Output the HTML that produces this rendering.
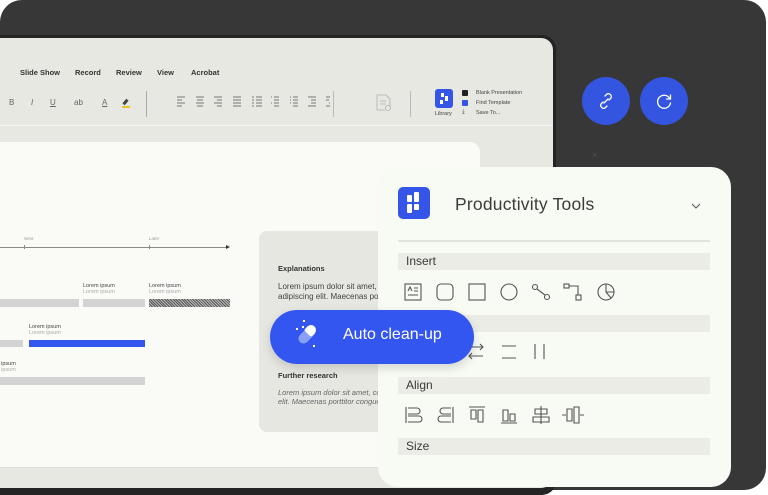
<!DOCTYPE html>
<html><head><meta charset="utf-8"><style>
*{margin:0;padding:0;box-sizing:border-box}
body{width:768px;height:470px;overflow:hidden;background:#fff;font-family:"Liberation Sans",sans-serif;position:relative}
.a{position:absolute}
.t{position:absolute;white-space:nowrap}
</style></head><body>
<div class="a" style="left:0;top:0;width:766px;height:490px;background:#373737;border-radius:22px"></div>
<!-- window -->
<div class="a" style="left:-20px;top:35px;width:576px;height:460px;background:#242424;border-radius:14px"></div>
<div class="a" style="left:-20px;top:38px;width:573px;height:450px;background:#e7e8e1;border-radius:12px;overflow:hidden">
</div>
<div class="a" style="left:0;top:125px;width:553px;height:1px;background:#f4f5f0"></div>
<div class="t" style="left:-4px;top:68px;font-size:7.5px;color:#333;font-weight:bold;word-spacing:1px">s</div>
<div class="t" style="left:20px;top:68px;font-size:7.5px;color:#333;font-weight:bold">Slide Show</div>
<div class="t" style="left:75px;top:68px;font-size:7.5px;color:#333;font-weight:bold">Record</div>
<div class="t" style="left:116px;top:68px;font-size:7.5px;color:#333;font-weight:bold">Review</div>
<div class="t" style="left:157px;top:68px;font-size:7.5px;color:#333;font-weight:bold">View</div>
<div class="t" style="left:191px;top:68px;font-size:7.5px;color:#333;font-weight:bold">Acrobat</div>
<div class="t" style="left:9px;top:98px;font-size:8px;color:#666">B</div>
<div class="t" style="left:31px;top:98px;font-size:8px;color:#666;font-style:italic">I</div>
<div class="t" style="left:50px;top:98px;font-size:8px;color:#666;text-decoration:underline">U</div>
<div class="t" style="left:74px;top:98px;font-size:8px;color:#666">ab</div>
<div class="t" style="left:102px;top:98px;font-size:8px;color:#666;text-decoration:underline">A</div>
<div class="a" style="left:122px;top:106px;width:8px;height:2px;background:#e6c62a"></div>
<div class="a" style="left:124px;top:99px;width:3px;height:6px;background:#444;transform:rotate(40deg)"></div>
<div class="a" style="left:146px;top:91px;width:1px;height:26px;background:#aaa"></div>
<div class="a" style="left:333px;top:91px;width:1px;height:26px;background:#bbb"></div>
<div class="a" style="left:410px;top:91px;width:1px;height:26px;background:#bbb"></div>
<svg class="a" style="left:170px;top:96px" width="160" height="12" stroke="#777" stroke-width="1">
<g><path d="M7 1h8M7 4h5M7 7h8M7 10h5"/><path d="M26 1h8M27 4h6M26 7h8M27 10h6"/><path d="M44 1h8M47 4h5M44 7h8M47 10h5"/><path d="M63 1h8M63 4h8M63 7h8M63 10h8"/><path d="M82 1h2M86 1h6M82 4h2M86 4h6M82 7h2M86 7h6M82 10h2M86 10h6"/><path d="M101 1h1M104 1h5M104 4h5M101 7h1M104 7h5M104 10h5"/><path d="M120 1h1M123 1h5M120 4h1M123 4h5M120 7h1M123 7h5M123 10h5"/><path d="M138 1h8M141 4h5M141 7h5M138 10h8"/><path d="M156 1h8M156 4h3M159 7h5M156 10h8" /></g></svg>
<svg class="a" style="left:376px;top:94px" width="16" height="18" fill="none" stroke="#bbb"><path d="M1 1h9l4 4v8M1 1v15h8"/><path d="M4 7h6M4 10h6"/><circle cx="12" cy="14" r="2.5"/></svg>
<div class="a" style="left:435px;top:89px;width:18px;height:19px;background:#3455e8;border-radius:3px"></div>
<div class="a" style="left:441px;top:93px;width:3px;height:4px;background:#fff"></div><div class="a" style="left:445px;top:96px;width:3px;height:5px;background:#fff"></div><div class="a" style="left:440px;top:100px;width:3px;height:4px;background:#fff"></div>
<div class="t" style="left:435px;top:111px;font-size:5.5px;color:#444">Library</div>
<div class="a" style="left:462px;top:90px;width:6px;height:6px;background:#222;border-radius:1px"></div>
<div class="a" style="left:462px;top:100px;width:6px;height:6px;background:#3455e8;border-radius:1px"></div>
<div class="t" style="left:462px;top:109px;font-size:6px;color:#444">⤓</div>
<div class="t" style="left:476px;top:90px;font-size:5.5px;color:#444">Blank Presentation</div>
<div class="t" style="left:476px;top:100px;font-size:5.5px;color:#444">Find Template</div>
<div class="t" style="left:476px;top:110px;font-size:5.5px;color:#444">Save To...</div>
<!-- slide -->
<div class="a" style="left:-10px;top:142px;width:490px;height:326px;background:#fafbf7;border-radius:10px;border-bottom:1px solid #ddd"></div>
<div class="a" style="left:0;top:247px;width:226px;height:1px;background:#888"></div>
<div class="a" style="left:226px;top:245px;width:0;height:0;border-left:4px solid #333;border-top:2.5px solid transparent;border-bottom:2.5px solid transparent"></div>
<div class="a" style="left:24px;top:245px;width:1px;height:4px;background:#888"></div>
<div class="a" style="left:149px;top:245px;width:1px;height:4px;background:#888"></div>
<div class="t" style="left:24px;top:236px;font-size:4.5px;color:#999;font-style:italic">Next</div>
<div class="t" style="left:149px;top:236px;font-size:4.5px;color:#999;font-style:italic">Later</div>
<div class="t" style="left:83px;top:283px;font-size:5.5px;color:#444;line-height:6px">Lorem ipsum<br><span style="color:#aaa">Lorem ipsum</span></div>
<div class="t" style="left:149px;top:283px;font-size:5.5px;color:#444;line-height:6px">Lorem ipsum<br><span style="color:#aaa">Lorem ipsum</span></div>
<div class="a" style="left:0;top:299px;width:79px;height:8px;background:#d3d3d3"></div>
<div class="a" style="left:83px;top:299px;width:62px;height:8px;background:#d3d3d3"></div>
<div class="a" style="left:149px;top:299px;width:81px;height:8px;background:repeating-linear-gradient(45deg,#555 0 1px,#bbb 1px 2px)"></div>
<div class="t" style="left:29px;top:324px;font-size:5.5px;color:#444;line-height:6px">Lorem ipsum<br><span style="color:#aaa">Lorem ipsum</span></div>
<div class="a" style="left:0;top:340px;width:23px;height:7px;background:#d3d3d3"></div>
<div class="a" style="left:29px;top:340px;width:116px;height:7px;background:#3455ee"></div>
<div class="t" style="left:-16px;top:361px;font-size:5.5px;color:#444;line-height:6px">Lorem ipsum<br><span style="color:#aaa">Lorem ipsum</span></div>
<div class="a" style="left:0;top:377px;width:145px;height:8px;background:#d3d3d3"></div>
<div class="a" style="left:259px;top:231px;width:140px;height:201px;background:#e6e7e1;border-radius:8px"></div>
<div class="t" style="left:278px;top:264px;font-size:7.5px;color:#333;font-weight:bold">Explanations</div>
<div class="t" style="left:278px;top:282px;font-size:8px;color:#444;line-height:9.5px">Lorem ipsum dolor sit amet,<br>adipiscing elit. Maecenas por</div>
<div class="t" style="left:278px;top:371px;font-size:7.5px;color:#333;font-weight:bold">Further research</div>
<div class="t" style="left:278px;top:388px;font-size:7.5px;color:#666;font-style:italic;line-height:9px">Lorem ipsum dolor sit amet, cc<br>elit. Maecenas porttitor congue</div>
<!-- circles -->
<div class="a" style="left:582px;top:77px;width:48px;height:48px;border-radius:50%;background:#3455e0"></div>
<svg class="a" style="left:594px;top:89px" width="24" height="24" fill="none" stroke="#fff" stroke-width="1.3" stroke-linecap="round"><path d="M11 7l2-2a3 3 0 014 4l-2 2M13 17l-2 2a3 3 0 01-4-4l2-2M10 14l4-4"/></svg>
<div class="a" style="left:640px;top:77px;width:48px;height:48px;border-radius:50%;background:#3455e0"></div>
<svg class="a" style="left:652px;top:89px" width="24" height="24" fill="none" stroke="#fff" stroke-width="1.3" stroke-linecap="round"><path d="M18 10a6.5 6.5 0 10.5 4"/><path d="M18.5 6v4h-4"/></svg>
<div class="t" style="left:592px;top:150px;font-size:9px;color:#555">×</div>
<!-- panel -->
<div class="a" style="left:378px;top:167px;width:353px;height:320px;background:#f8faf4;border-radius:20px"></div>
<div class="a" style="left:398px;top:187px;width:32px;height:32px;background:#3455e8;border-radius:5px"></div>
<div class="a" style="left:407px;top:195px;width:5px;height:7px;background:#fff;border-radius:1px"></div>
<div class="a" style="left:414px;top:192px;width:5px;height:10px;background:#fff;border-radius:1px"></div>
<div class="a" style="left:407px;top:204px;width:5px;height:9px;background:#fff;border-radius:1px"></div>
<div class="a" style="left:414px;top:204px;width:5px;height:6px;background:#fff;border-radius:1px"></div>
<div class="t" style="left:455px;top:194px;font-size:17.5px;color:#3c3c3c;letter-spacing:0.2px">Productivity Tools</div>
<svg class="a" style="left:691px;top:202px" width="10" height="8" fill="none" stroke="#555"><path d="M1 2l4 4 4-4"/></svg>
<div class="a" style="left:398px;top:240px;width:312px;height:1.5px;background:#e2e3dd"></div>
<div class="a" style="left:398px;top:253px;width:312px;height:17px;background:#ebece6"></div>
<div class="t" style="left:406px;top:254px;font-size:12px;color:#3a3a3a">Insert</div>
<div class="a" style="left:398px;top:315px;width:312px;height:17px;background:#ebece6"></div>
<div class="a" style="left:398px;top:377px;width:312px;height:17px;background:#ebece6"></div>
<div class="t" style="left:406px;top:378px;font-size:12px;color:#3a3a3a">Align</div>
<div class="a" style="left:398px;top:438px;width:312px;height:17px;background:#ebece6"></div>
<div class="t" style="left:406px;top:439px;font-size:12px;color:#3a3a3a">Size</div>
<svg class="a" style="left:398px;top:280px" width="320" height="150" fill="none" stroke="#555" stroke-width="1.1">
<rect x="7" y="4" width="16" height="16"/><path d="M10 11l2-4 2 4M16 8h4M16 11h4M10 15h10"/>
<rect x="39" y="4" width="16" height="16" rx="4"/>
<rect x="71" y="4" width="16" height="16"/>
<circle cx="111" cy="12" r="8"/>
<circle cx="137" cy="7" r="2.5"/><circle cx="149" cy="17" r="2.5"/><path d="M139 9l8 6"/>
<rect x="166" y="4" width="5" height="4"/><rect x="178" y="15" width="5" height="5"/><path d="M171 6h9v9"/>
<circle cx="208" cy="12" r="8"/><path d="M208 4v8h8M208 12l5 6"/>
<path d="M71 67h14M71 76h14M82 64l3 3-3 3M74 73l-3 3 3 3"/>
<path d="M104 66h14M104 78h14"/>
<path d="M137 64v15M146 64v15"/>
<path d="M8 127v16M10 128h9a3 3 0 010 6h-9M10 136h11a3 3 0 010 6h-11"/>
<path d="M55 127v16M53 128h-8a3 3 0 000 6h8M53 136h-10a3 3 0 000 6h10"/>
<path d="M71 127h16M73 130h5v9h-5zM80 130h5v12h-5z"/>
<path d="M103 143h16M105 130h5v11h-5zM112 134h5v7h-5z"/>
<path d="M143 126v18M137 129h12v5h-12zM135 137h16v5h-16z"/>
<path d="M164 135h4M182 135h4M169 129h5v12h-5zM176 127h5v16h-5z"/>
</svg>
<!-- pill -->
<div class="a" style="left:270px;top:310px;width:204px;height:54px;background:#3456f0;border-radius:27px;box-shadow:0 4px 10px rgba(0,0,0,.15)"></div>
<div class="a" style="left:297px;top:330px;width:20px;height:10px;border-radius:5px;background:#8aa0f5;transform:rotate(-45deg)"></div>
<div class="a" style="left:306px;top:325px;width:10px;height:10px;border-radius:5px 5px 2px 2px;background:#fff;transform:rotate(45deg)"></div>
<div class="a" style="left:296px;top:328px;width:2px;height:2px;background:#fff"></div>
<div class="a" style="left:302px;top:326px;width:2px;height:2px;background:#fff"></div>
<div class="a" style="left:303px;top:320px;width:2px;height:2px;background:#fff"></div>
<div class="a" style="left:313px;top:345px;width:2px;height:2px;background:#fff"></div>
<div class="t" style="left:343px;top:326px;font-size:16px;color:#fff">Auto clean-up</div>
</body></html>
